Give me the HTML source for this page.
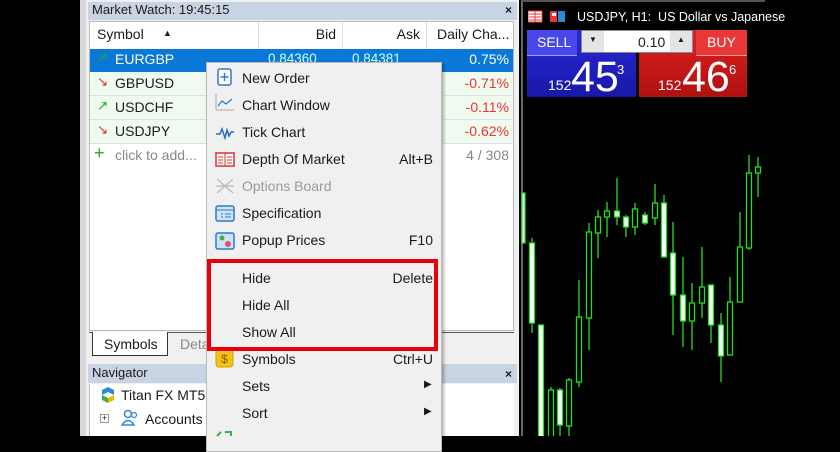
<!DOCTYPE html>
<html><head><meta charset="utf-8"><style>
*{margin:0;padding:0;box-sizing:border-box}
body{width:840px;height:436px;background:#000;position:relative;overflow:hidden;font-family:"Liberation Sans",sans-serif;font-size:13.5px;color:#1a1a1a}
.a{position:absolute}
.t{position:absolute;white-space:nowrap}
.r{text-align:right}
.sc{position:absolute;white-space:nowrap;right:407px;text-align:right}
</style></head><body>
<!-- left strip -->
<div class="a" style="left:80px;top:0;width:7px;height:436px;background:#d8d8d8"></div>
<!-- panel -->
<div class="a" style="left:86px;top:0;width:433px;height:436px;background:#f0f0f0"></div>
<div class="a" style="left:88px;top:2px;width:429px;height:18px;background:#c8d4e3"></div>
<div class="t" style="left:92px;top:2px;font-size:13px">Market Watch: 19:45:15</div>
<div class="t" style="left:505px;top:3px;font-size:12px;font-weight:bold">×</div>
<div class="a" style="left:89px;top:21px;width:425px;height:310px;background:#fff;border:1px solid #bbb"></div>
<div class="a" style="left:258px;top:22px;width:1px;height:122px;background:#e0e0e0"></div>
<div class="a" style="left:342px;top:22px;width:1px;height:122px;background:#e0e0e0"></div>
<div class="a" style="left:426px;top:22px;width:1px;height:122px;background:#e0e0e0"></div>
<div class="t" style="left:97px;top:26px;font-size:14px">Symbol</div>
<div class="t" style="left:163px;top:28px;font-size:9px">▲</div>
<div class="t r" style="left:260px;width:76px;top:26px;font-size:14px">Bid</div>
<div class="t r" style="left:344px;width:76px;top:26px;font-size:14px">Ask</div>
<div class="t" style="left:437px;top:26px;font-size:14px">Daily Cha...</div>
<div class="a" style="left:90px;top:49px;width:423px;height:23px;background:#0a78d7"></div>
<div class="a" style="left:90px;top:72px;width:423px;height:71px;background:#effbef"></div>
<div class="a" style="left:90px;top:95px;width:423px;height:1px;background:#dde"></div>
<div class="a" style="left:90px;top:119px;width:423px;height:1px;background:#dde"></div>
<div class="a" style="left:90px;top:143px;width:423px;height:1px;background:#dde"></div>
<div class="t" style="left:97px;top:50px;color:#2a2;font-size:13px">↗</div>
<div class="t" style="left:115px;top:51px;color:#fff;font-size:14px">EURGBP</div>
<div class="t" style="left:268px;top:51px;color:#cfe">0.84360</div>
<div class="t" style="left:352px;top:51px;color:#cfe">0.84381</div>
<div class="t r" style="left:430px;width:79px;top:51px;color:#fff;font-size:14px">0.75%</div>
<div class="t" style="left:97px;top:74px;color:#d33">↘</div><div class="t" style="left:115px;top:75px;font-size:14px">GBPUSD</div><div class="t r" style="left:430px;width:79px;top:75px;color:#e33;font-size:14px">-0.71%</div>
<div class="t" style="left:97px;top:98px;color:#2a2">↗</div><div class="t" style="left:115px;top:99px;font-size:14px">USDCHF</div><div class="t r" style="left:430px;width:79px;top:99px;color:#e33;font-size:14px">-0.11%</div>
<div class="t" style="left:97px;top:122px;color:#d33">↘</div><div class="t" style="left:115px;top:123px;font-size:14px">USDJPY</div><div class="t r" style="left:430px;width:79px;top:123px;color:#e33;font-size:14px">-0.62%</div>
<div class="t" style="left:94px;top:143px;color:#2a2;font-size:18px">+</div>
<div class="t" style="left:115px;top:147px;color:#888;font-size:14px">click to add...</div>
<div class="t r" style="left:430px;width:79px;top:147px;color:#888;font-size:14px">4 / 308</div>
<!-- tabs -->
<div class="a" style="left:89px;top:332px;width:425px;height:26px;background:#f0f0f0;border-top:1px solid #555"></div>
<div class="a" style="left:92px;top:332px;width:76px;height:24px;background:#fff;border:1px solid #333;border-top:none"></div>
<div class="t" style="left:104px;top:336px;font-size:14px">Symbols</div>
<div class="t" style="left:180px;top:336px;font-size:14px;color:#888">Deta</div>
<div class="a" style="left:88px;top:364px;width:429px;height:19px;background:#c8d4e3"></div>
<div class="t" style="left:92px;top:365px;font-size:13px">Navigator</div>
<div class="t" style="left:505px;top:367px;font-size:12px;font-weight:bold">×</div>
<div class="a" style="left:89px;top:384px;width:425px;height:52px;background:#fff;border-left:1px solid #bbb"></div>
<svg class="a" style="left:100px;top:386px" width="16" height="18"><path d="M2 4 L8 1 L14 4 L14 9 L8 6 L2 9Z" fill="#2a8ad8"/><path d="M2 9 L8 12 L8 17 L2 14Z" fill="#3bb04a"/><path d="M8 12 L14 9 L14 14 L8 17Z" fill="#f2b807"/></svg>
<div class="t" style="left:121px;top:387px;font-size:14px">Titan FX MT5</div>
<div class="a" style="left:100px;top:414px;width:9px;height:9px;border:1px solid #999;background:#fff;font-size:9px;line-height:7px;text-align:center">+</div>
<svg class="a" style="left:120px;top:409px" width="20" height="18"><circle cx="8" cy="5" r="3.5" fill="none" stroke="#2a8ad8" stroke-width="1.5"/><path d="M2 16 Q8 7 14 16Z" fill="none" stroke="#2a8ad8" stroke-width="1.5"/><circle cx="14" cy="6" r="2.5" fill="none" stroke="#2a8ad8" stroke-width="1.2"/></svg>
<div class="t" style="left:145px;top:411px;font-size:14px">Accounts</div>

<!-- context menu -->
<div class="a" style="left:206px;top:62px;width:236px;height:390px;background:#f0f0f0;border:1px solid #bbb;box-shadow:2px 2px 3px rgba(0,0,0,.3)"></div>
<div style="position:absolute;left:0;top:0;width:840px;font-size:14px">
<div class="t" style="left:242px;top:70px">New Order</div>
<div class="t" style="left:242px;top:97px">Chart Window</div>
<div class="t" style="left:242px;top:124px">Tick Chart</div>
<div class="t" style="left:242px;top:151px">Depth Of Market</div><div class="sc" style="top:151px">Alt+B</div>
<div class="t" style="left:242px;top:178px;color:#999">Options Board</div>
<div class="t" style="left:242px;top:205px">Specification</div>
<div class="t" style="left:242px;top:232px">Popup Prices</div><div class="sc" style="top:232px">F10</div>
<div class="t" style="left:242px;top:270px">Hide</div><div class="sc" style="top:270px">Delete</div>
<div class="t" style="left:242px;top:297px">Hide All</div>
<div class="t" style="left:242px;top:324px">Show All</div>
<div class="t" style="left:242px;top:351px">Symbols</div><div class="sc" style="top:351px">Ctrl+U</div>
<div class="t" style="left:242px;top:378px">Sets</div><div class="t" style="left:424px;top:379px;font-size:10px">▶</div>
<div class="t" style="left:242px;top:405px">Sort</div><div class="t" style="left:424px;top:406px;font-size:10px">▶</div>
</div>
<svg class="a" style="left:214px;top:66px" width="22" height="200">
<rect x="4" y="3" width="13" height="16" rx="2" fill="#fff" stroke="#2a7ad0" stroke-width="1.5"/><path d="M10.5 7v8M6.5 11h8" stroke="#2a7ad0" stroke-width="1.4"/>
<path d="M2 28v16h18" stroke="#aaa" fill="none"/><path d="M4 40 L8 35 L12 38 L18 33" stroke="#2a7ad0" fill="none" stroke-width="1.2"/>
<path d="M2 68 H6 L8 63 L11 72 L13 64 L15 70 L17 66 H20" stroke="#2a6ab8" fill="none" stroke-width="1.5"/>
<rect x="2" y="87" width="18" height="13" fill="#fff" stroke="#d33" stroke-width="1.5"/><path d="M11 87v13M4 91h5M4 94h5M4 97h5M13 91h5M13 94h5M13 97h5" stroke="#d33"/>
<path d="M3 113 L19 127 M19 113 L3 127 M2 120 H20" stroke="#bbb" stroke-width="1.2"/>
<rect x="2" y="140" width="18" height="15" rx="2" fill="#cfe3f7" stroke="#2a7ad0" stroke-width="1.5"/><path d="M2 144h18M7 148h2M11 148h6M7 151h2M11 151h6" stroke="#2a7ad0"/>
<rect x="2" y="167" width="18" height="16" rx="2" fill="#cfe3f7" stroke="#2a7ad0" stroke-width="1.5"/><circle cx="8" cy="172" r="2.5" fill="#3bb04a"/><circle cx="14" cy="178" r="3" fill="#e05060"/>
</svg>
<svg class="a" style="left:215px;top:349px" width="20" height="20"><rect x="1" y="1" width="17" height="17" rx="3" fill="#f3c21a" stroke="#d9a000"/><text x="9.5" y="14" font-size="12" font-family="Liberation Sans" text-anchor="middle" fill="#8a5a00">$</text></svg>
<svg class="a" style="left:215px;top:431px" width="20" height="6"><path d="M2 5 L6 1 M10 1 H16 V5" stroke="#3bb04a" stroke-width="2" fill="none"/></svg>
<div class="a" style="left:207px;top:259px;width:231px;height:92px;border:4px solid #e8000b"></div>

<!-- chart -->
<div class="a" style="left:521px;top:0;width:244px;height:436px;background:#000;border-left:2px solid #666;border-top:2px solid #555"></div>
<svg class="a" style="left:528px;top:10px" width="40" height="14"><rect x="0" y="1" width="14" height="11" fill="#fff" stroke="#e33"/><path d="M7 1v11M1 4h12M1 7h12M1 10h12" stroke="#e33"/><rect x="22" y="1" width="7" height="11" fill="#e33"/><rect x="30" y="1" width="7" height="11" fill="#2a8ad8"/><rect x="24" y="3" width="4" height="3" fill="#fff"/></svg>
<div class="t" style="left:577px;top:10px;color:#fff;font-size:12.5px">USDJPY, H1:&nbsp; US Dollar vs Japanese</div>
<div class="a" style="left:527px;top:30px;width:109px;height:67px;background:linear-gradient(#2828d8,#1818a8)"></div>
<div class="a" style="left:527px;top:30px;width:50px;height:26px;background:#4848e8;border-bottom:1px solid #99f"></div>
<div class="t" style="left:537px;top:34px;color:#fff;font-size:14px">SELL</div>
<div class="t" style="left:548px;top:77px;color:#fff;font-size:14px">152</div>
<div class="t" style="left:571px;top:53px;color:#fff;font-size:43px">45</div>
<div class="t" style="left:617px;top:62px;color:#fff;font-size:13px">3</div>
<div class="a" style="left:639px;top:30px;width:108px;height:67px;background:linear-gradient(#e02020,#b01010)"></div>
<div class="a" style="left:696px;top:30px;width:51px;height:26px;background:#e83838;border-bottom:1px solid #f99"></div>
<div class="t" style="left:707px;top:34px;color:#fff;font-size:14px">BUY</div>
<div class="t" style="left:658px;top:77px;color:#fff;font-size:14px">152</div>
<div class="t" style="left:682px;top:53px;color:#fff;font-size:43px">46</div>
<div class="t" style="left:729px;top:62px;color:#fff;font-size:13px">6</div>
<div class="a" style="left:581px;top:30px;width:112px;height:23px;background:#fff;border:1px solid #888"></div>
<div class="a" style="left:582px;top:31px;width:22px;height:21px;background:#e4e4e4"></div>
<div class="a" style="left:670px;top:31px;width:22px;height:21px;background:#e4e4e4"></div>
<div class="t" style="left:589px;top:35px;font-size:8px">▼</div>
<div class="t" style="left:677px;top:35px;font-size:8px">▲</div>
<div class="t" style="left:638px;top:34px;font-size:14px">0.10</div>
<svg class="a" style="left:0;top:0" width="840" height="436" stroke="#22dd22" stroke-width="1.3">
<g>
<rect x="522" y="193" width="3" height="50" fill="#fff"/>
<line x1="532" y1="238" x2="532" y2="333"/><rect x="529.5" y="243" width="5" height="80" fill="#fff"/>
<rect x="538.5" y="325" width="5" height="115" fill="#fff"/>
<line x1="551" y1="387" x2="551" y2="436"/><rect x="548.5" y="390" width="5" height="50" fill="#000"/>
<line x1="560" y1="388" x2="560" y2="436"/><rect x="557.5" y="390" width="5" height="35" fill="#fff"/>
<line x1="569" y1="378" x2="569" y2="436"/><rect x="566.5" y="380" width="5" height="46" fill="#000"/>
<line x1="579" y1="280" x2="579" y2="387"/><rect x="576.5" y="317" width="5" height="65" fill="#000"/>
<line x1="589" y1="223" x2="589" y2="350"/><rect x="586.5" y="232" width="5" height="86" fill="#000"/>
<line x1="598" y1="210" x2="598" y2="258"/><rect x="595.5" y="217" width="5" height="16" fill="#000"/>
<line x1="607" y1="202" x2="607" y2="237"/><rect x="604.5" y="211" width="5" height="6" fill="#000"/>
<line x1="617" y1="178" x2="617" y2="225"/><rect x="614.5" y="211" width="5" height="6" fill="#fff"/>
<line x1="626" y1="215" x2="626" y2="237"/><rect x="623.5" y="217" width="5" height="10" fill="#fff"/>
<line x1="635" y1="203" x2="635" y2="235"/><rect x="632.5" y="209" width="5" height="18" fill="#000"/>
<line x1="645" y1="212" x2="645" y2="225"/><rect x="642.5" y="215" width="5" height="8" fill="#fff"/>
<line x1="655" y1="184" x2="655" y2="225"/><rect x="652.5" y="203" width="5" height="15" fill="#000"/>
<line x1="664" y1="195" x2="664" y2="257"/><rect x="661.5" y="203" width="5" height="54" fill="#fff"/>
<line x1="673" y1="222" x2="673" y2="335"/><rect x="670.5" y="253" width="5" height="42" fill="#fff"/>
<line x1="683" y1="257" x2="683" y2="347"/><rect x="680.5" y="295" width="5" height="26" fill="#fff"/>
<line x1="692" y1="283" x2="692" y2="350"/><rect x="689.5" y="303" width="5" height="18" fill="#000"/>
<line x1="702" y1="247" x2="702" y2="318"/><rect x="699.5" y="287" width="5" height="16" fill="#000"/>
<line x1="711" y1="285" x2="711" y2="343"/><rect x="708.5" y="285" width="5" height="40" fill="#fff"/>
<line x1="721" y1="313" x2="721" y2="382"/><rect x="718.5" y="325" width="5" height="31" fill="#fff"/>
<line x1="730" y1="277" x2="730" y2="355"/><rect x="727.5" y="302" width="5" height="53" fill="#000"/>
<line x1="740" y1="212" x2="740" y2="302"/><rect x="737.5" y="247" width="5" height="55" fill="#000"/>
<line x1="749" y1="155" x2="749" y2="250"/><rect x="746.5" y="173" width="5" height="75" fill="#000"/>
<line x1="758" y1="157" x2="758" y2="197"/><rect x="755.5" y="167" width="5" height="6" fill="#000"/>
</g></svg>
</body></html>
